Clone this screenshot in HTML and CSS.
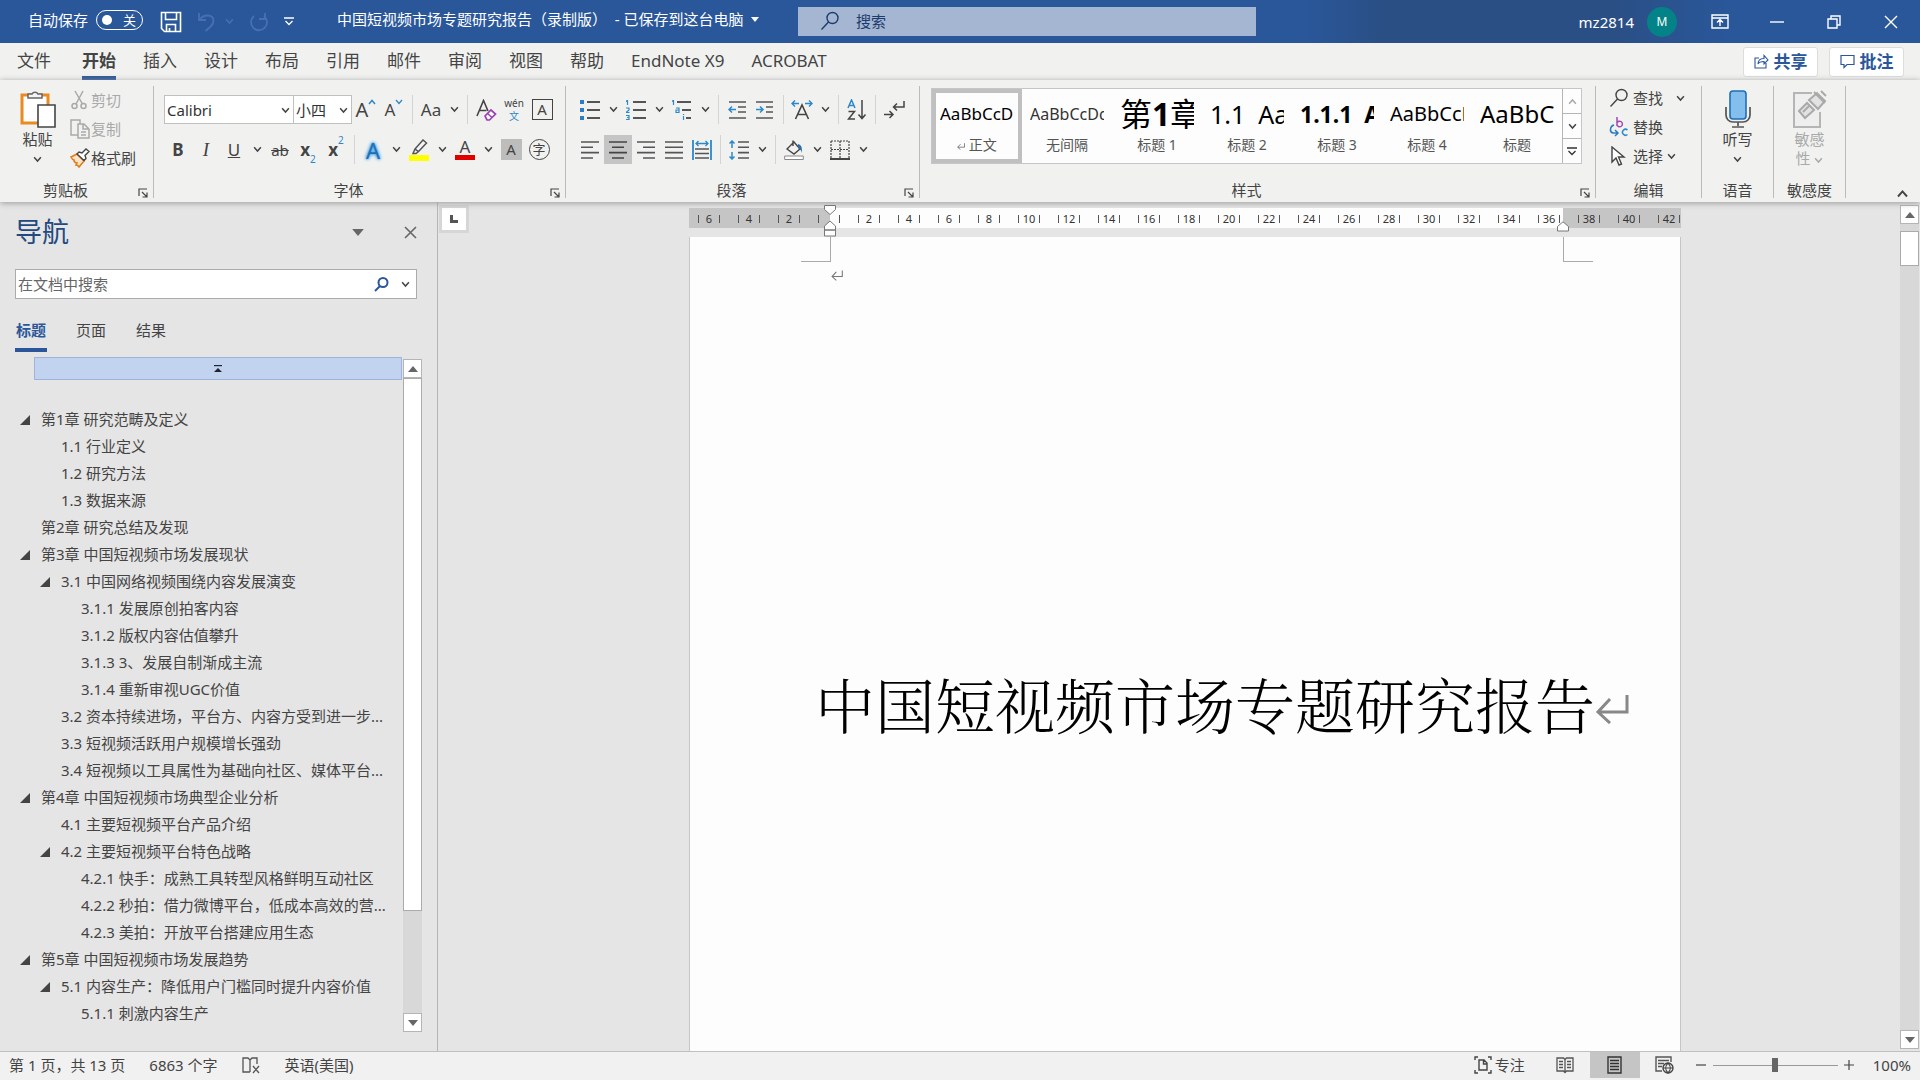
FILE: index.html
```html
<!DOCTYPE html>
<html lang="zh-CN">
<head>
    <meta charset="UTF-8">
    <meta name="viewport" content="width=device-width, initial-scale=1.0">
    <title>中国短视频市场专题研究报告（录制版）</title>
    <link rel="stylesheet" href="styles.css">
</head>
<body>
<!-- shared icons -->
<svg class="defs" aria-hidden="true">
    <symbol id="chev" viewBox="0 0 8 6"><path d="M1 1l3 3.400L7 1" fill="none" stroke="currentColor" stroke-width="1.300"/></symbol>
    <symbol id="tri-down" viewBox="0 0 10 6"><path d="M0 0h10L5 6z" fill="currentColor"/></symbol>
    <symbol id="tri-up" viewBox="0 0 10 6"><path d="M0 6h10L5 0z" fill="currentColor"/></symbol>
    <symbol id="fold" viewBox="0 0 10 10"><path d="M0 10h10V0z" fill="currentColor"/></symbol>
    <symbol id="launch" viewBox="0 0 10 10"><path d="M1 8V1h8M4 4l5 5M9 4.500V9H4.500" fill="none" stroke="currentColor" stroke-width="1.200"/></symbol>
    <symbol id="lens" viewBox="0 0 20 20"><g fill="none" stroke="currentColor" stroke-width="1.400"><circle cx="12.500" cy="7" r="5.500"/><path d="M8.500 11L1.500 18.500"/></g></symbol>
    <symbol id="enter" viewBox="0 0 34 30"><path d="M32 1v17H3M15 5L3 18l12 11" fill="none" stroke="currentColor" stroke-width="3"/></symbol>
</svg>

<header class="titlebar">
    <div class="autosave">
        <span>自动保存</span>
        <button class="toggle" aria-label="自动保存">关</button>
    </div>
    <div class="quick">
        <button aria-label="保存"><svg width="22" height="22" viewBox="0 0 22 22"><path d="M1.500 1.500h19v19h-16l-3-3zM5.500 1.500v7h11v-7M6.500 20v-6.500h9V20M9.500 20v-3" fill="none" stroke="#fff" stroke-width="1.600"/></svg></button>
        <button class="off" aria-label="撤消"><svg width="20" height="20" viewBox="0 0 20 20"><path d="M2 1v7h7M2.500 7.500C7 2 16 2 16.500 8.500c.2 4-3.500 7-8 10.500" fill="none" stroke="currentColor" stroke-width="1.800"/></svg><svg class="chev"><use href="#chev"/></svg></button>
        <button class="off" aria-label="重复"><svg width="20" height="20" viewBox="0 0 20 20"><path d="M16 1v6h-6M5 4a8 8 0 1 0 10 0" fill="none" stroke="currentColor" stroke-width="1.800"/></svg></button>
        <button aria-label="自定义"><svg width="10" height="9" viewBox="0 0 10 9"><path d="M0 1h10M1.500 4L5 7.500 8.500 4" fill="none" stroke="#fff" stroke-width="1.300"/></svg></button>
    </div>
    <div class="doc-name">中国短视频市场专题研究报告（录制版）&nbsp; <span>- 已保存到这台电脑</span> <svg width="8" height="5"><use href="#tri-down"/></svg></div>
    <label class="search">
        <svg width="20" height="20"><use href="#lens"/></svg>
        <input type="text" placeholder="搜索" aria-label="搜索">
    </label>
    <div class="account">
        <span>mz2814</span>
        <span class="avatar">M</span>
    </div>
    <div class="win">
        <button aria-label="功能区显示选项"><svg width="18" height="15" viewBox="0 0 18 15"><path d="M1 1h16v13H1zM1 4h16M9 12V6M6 8.500l3-3 3 3" fill="none" stroke="#fff" stroke-width="1.400"/></svg></button>
        <button aria-label="最小化"><svg width="14" height="14" viewBox="0 0 14 14"><path d="M0 7h14" stroke="#fff" stroke-width="1.400"/></svg></button>
        <button aria-label="还原"><svg width="14" height="14" viewBox="0 0 14 14"><path d="M1 4h9v9H1zM4 4V1h9v9h-3" fill="none" stroke="#fff" stroke-width="1.400"/></svg></button>
        <button aria-label="关闭"><svg width="14" height="14" viewBox="0 0 14 14"><path d="M1 1l12 12M13 1L1 13" stroke="#fff" stroke-width="1.400"/></svg></button>
    </div>
</header>

<nav class="tabs">
    <a href="#" class="file">文件</a>
    <a href="#" class="on">开始</a>
    <a href="#">插入</a>
    <a href="#">设计</a>
    <a href="#">布局</a>
    <a href="#">引用</a>
    <a href="#">邮件</a>
    <a href="#">审阅</a>
    <a href="#">视图</a>
    <a href="#">帮助</a>
    <a href="#">EndNote X9</a>
    <a href="#">ACROBAT</a>
    <div class="tab-actions">
        <button><svg width="15" height="15" viewBox="0 0 15 15"><path d="M5 4H1v10h11V9M4 10c0-4 3-5.500 6-5.500V1.500L14 6l-4 4V7.500C7 7.500 5 8 4 10z" fill="none" stroke="currentColor" stroke-width="1.100"/></svg>共享</button>
        <button><svg width="15" height="15" viewBox="0 0 15 15"><path d="M1 1.500h13v9H7L4 13.500v-3H1z" fill="none" stroke="currentColor" stroke-width="1.200"/></svg>批注</button>
    </div>
</nav>

<section class="ribbon">
    <div class="group clipboard">
        <div class="body">
            <button class="big">
                <svg width="36" height="38" viewBox="0 0 36 38"><path d="M2 5h26v28H2z" fill="#fff" stroke="#eb8a1e" stroke-width="3"/><path d="M8 8V4h4a3.500 3.500 0 0 1 6 0h4v4z" fill="#f4f4f4" stroke="#666" stroke-width="1.500"/><path d="M18 15h17v22H18z" fill="#fff" stroke="#444" stroke-width="1.600"/></svg>
                <span>粘贴</span>
                <svg class="chev"><use href="#chev"/></svg>
            </button>
            <div class="stack">
                <button class="off"><svg width="20" height="20" viewBox="0 0 20 20"><g fill="none" stroke="currentColor" stroke-width="1.500"><path d="M5 1l7.500 13M13 1L6 14"/><circle cx="4.500" cy="16" r="2.500"/><circle cx="13.500" cy="16" r="2.500"/></g></svg>剪切</button>
                <button class="off"><svg width="20" height="20" viewBox="0 0 20 20"><path d="M8 16H1V1h9v4M8 5h6l5 5v9H8zM13 5v5h6M11 13h5M11 16h5" fill="none" stroke="currentColor" stroke-width="1.500"/></svg>复制</button>
                <button><svg width="20" height="20" viewBox="0 0 20 20"><path d="M1 9l6-3 7 7-5 6c-1-2-2-2-3-2l1-2c-2 0-3-1-3-3-1 0-2-1-3-3z" fill="#fbe3c5" stroke="#e07c1c" stroke-width="1.600"/><path d="M7 6l2-2 3 1 4-4 3 2.500-4 4 1 3-2 2z" fill="#fff" stroke="#444" stroke-width="1.400"/></svg>格式刷</button>
            </div>
        </div>
        <div class="caption">剪贴板<button class="launch" aria-label="剪贴板选项"><svg width="10" height="10"><use href="#launch"/></svg></button></div>
    </div>

    <div class="group font">
        <div class="body rows">
            <div class="row">
                <span class="combo face"><select aria-label="字体"><option>Calibri</option></select><svg class="chev"><use href="#chev"/></svg></span>
                <span class="combo size"><select aria-label="字号"><option>小四</option></select><svg class="chev"><use href="#chev"/></svg></span>
                <button class="ib grow" aria-label="增大字号">A<svg width="8" height="6" viewBox="0 0 8 6"><path d="M1 5l3-3.500L7 5" fill="none" stroke="#2b88c9" stroke-width="1.500"/></svg></button>
                <button class="ib shrink" aria-label="减小字号">A<svg width="8" height="6"><use href="#chev"/></svg></button>
                <i class="sep"></i>
                <button class="ib aa">Aa</button><button class="dd" aria-label="更多"><svg class="chev"><use href="#chev"/></svg></button>
                <i class="sep"></i>
                <button class="ib" aria-label="清除格式"><svg width="22" height="22" viewBox="0 0 22 22"><path d="M2 17L8.500 1.500 13 12M4.500 11.500h7" fill="none" stroke="#444" stroke-width="1.600"/><path d="M10 17l6-6 4.500 4-6 6H12z" fill="#fff" stroke="#9b3fb5" stroke-width="1.700"/><path d="M12.500 14.500l4.500 4" stroke="#9b3fb5" stroke-width="1.500"/></svg></button>
                <button class="ib pinyin"><span>wén</span><b>文</b></button>
                <button class="ib"><span class="boxed">A</span></button>
            </div>
            <div class="row">
                <button class="ib"><b>B</b></button>
                <button class="ib it">I</button>
                <button class="ib"><u>U</u></button><button class="dd" aria-label="下划线"><svg class="chev"><use href="#chev"/></svg></button>
                <button class="ib"><s>ab</s></button>
                <button class="ib script"><b>x</b><sub>2</sub></button>
                <button class="ib script"><b>x</b><sup>2</sup></button>
                <i class="sep"></i>
                <button class="ib glow">A</button><button class="dd" aria-label="文本效果"><svg class="chev"><use href="#chev"/></svg></button>
                <button class="ib" aria-label="突出显示"><svg width="22" height="22" viewBox="0 0 22 22"><path d="M1 16h20v6H1z" fill="#ff0"/><path d="M7 10l8-9 3.500 3-8 8.500zM7 10l-2 4.500h3l2.500-2" fill="#f4f4f4" stroke="#555" stroke-width="1.500"/></svg></button><button class="dd" aria-label="颜色"><svg class="chev"><use href="#chev"/></svg></button>
                <button class="ib"><span class="red">A</span></button><button class="dd" aria-label="字体颜色"><svg class="chev"><use href="#chev"/></svg></button>
                <button class="ib"><span class="shade">A</span></button>
                <button class="ib"><span class="circled">字</span></button>
            </div>
        </div>
        <div class="caption">字体<button class="launch" aria-label="字体选项"><svg width="10" height="10"><use href="#launch"/></svg></button></div>
    </div>

    <div class="group para">
        <div class="body rows">
            <div class="row">
                <button class="ib" aria-label="项目符号"><svg width="20" height="20" viewBox="0 0 20 20"><path d="M0 0h4v4H0zM0 8h4v4H0zM0 16h4v4H0z" fill="#2b7cc4"/><path d="M7 2h13M7 10h13M7 18h13" stroke="#555" stroke-width="1.800"/></svg></button><button class="dd" aria-label="更多"><svg class="chev"><use href="#chev"/></svg></button>
                <button class="ib" aria-label="编号"><svg width="20" height="20" viewBox="0 0 20 20"><path d="M0 1.500L1.500 0v5M0 8h3v2L0 12.500h3.500M0 15.500h3v4H0M1 17.500h2" fill="none" stroke="#2b88c9" stroke-width="1.200"/><path d="M7 2h13M7 10h13M7 18h13" stroke="#555" stroke-width="1.800"/></svg></button><button class="dd" aria-label="更多"><svg class="chev"><use href="#chev"/></svg></button>
                <button class="ib" aria-label="多级列表"><svg width="20" height="20" viewBox="0 0 20 20"><path d="M0 1.500L1.500 0v5M4 8h3v4.500H4V10h3M11.500 14v1M11.500 16v4" fill="none" stroke="#2b88c9" stroke-width="1.200"/><path d="M5 2h14M10 10h9M14 18h5" stroke="#555" stroke-width="1.800"/></svg></button><button class="dd" aria-label="更多"><svg class="chev"><use href="#chev"/></svg></button>
                <i class="sep"></i>
                <button class="ib" aria-label="减少缩进"><svg width="18" height="18" viewBox="0 0 18 18"><path d="M1 1h17M10 6h8M10 11h8M1 17h17" stroke="#555" stroke-width="1.600"/><path d="M8 8.500H1M4 5.500l-3 3 3 3" fill="none" stroke="#2b88c9" stroke-width="1.500"/></svg></button>
                <button class="ib" aria-label="增加缩进"><svg width="18" height="18" viewBox="0 0 18 18"><path d="M0 1h17M10 6h7M10 11h7M0 17h17" stroke="#555" stroke-width="1.600"/><path d="M0 8.500h7M4 5.500l3 3-3 3" fill="none" stroke="#2b88c9" stroke-width="1.500"/></svg></button>
                <i class="sep"></i>
                <button class="ib" aria-label="中文版式"><svg width="22" height="20" viewBox="0 0 22 20"><path d="M4.500 19L11 5l6.500 14M7 14.500h8" fill="none" stroke="#444" stroke-width="1.600"/><path d="M8 3.500H1M4 .5l-3 3 3 3M14 3.500h7M18 .5l3 3-3 3" fill="none" stroke="#2b88c9" stroke-width="1.400"/></svg></button><button class="dd" aria-label="更多"><svg class="chev"><use href="#chev"/></svg></button>
                <i class="sep"></i>
                <button class="ib" aria-label="排序"><svg width="20" height="21" viewBox="0 0 20 21"><path d="M1 9l3.500-8L8 9M2.500 6.500h4" fill="none" stroke="#2b88c9" stroke-width="1.500"/><path d="M1.500 12.500h6L1.500 20H8M15 1v18M11.500 15.500L15 19.500l3.500-4" fill="none" stroke="#444" stroke-width="1.500"/></svg></button>
                <i class="sep"></i>
                <button class="ib" aria-label="显示编辑标记"><svg width="22" height="20" viewBox="0 0 22 20"><path d="M21 1v6H11M14 3.500L10.500 7l3.500 3.500M1 14.500h9M6.500 11l3.500 3.500L6.500 18" fill="none" stroke="#444" stroke-width="1.500"/></svg></button>
            </div>
            <div class="row">
                <button class="ib" aria-label="左对齐"><svg width="18" height="18" viewBox="0 0 18 18"><path d="M0 1h18M0 6.300h12M0 11.600h18M0 17h12" stroke="#555" stroke-width="1.600"/></svg></button>
                <button class="ib on" aria-label="居中"><svg width="18" height="18" viewBox="0 0 18 18"><path d="M0 1h18M3 6.300h12M0 11.600h18M3 17h12" stroke="#444" stroke-width="1.600"/></svg></button>
                <button class="ib" aria-label="右对齐"><svg width="18" height="18" viewBox="0 0 18 18"><path d="M0 1h18M6 6.300h12M0 11.600h18M6 17h12" stroke="#555" stroke-width="1.600"/></svg></button>
                <button class="ib" aria-label="两端对齐"><svg width="18" height="18" viewBox="0 0 18 18"><path d="M0 1h18M0 6.300h18M0 11.600h18M0 17h18" stroke="#555" stroke-width="1.600"/></svg></button>
                <button class="ib" aria-label="分散对齐"><svg width="20" height="20" viewBox="0 0 20 20"><path d="M1 0v20M19 0v20" stroke="#2b88c9" stroke-width="1.800"/><path d="M4 3.500h12M6.500 1L4 3.500 6.500 6M13.500 1L16 3.500 13.500 6" fill="none" stroke="#2b88c9" stroke-width="1.300"/><path d="M3 9h14M3 13.500h14M3 18h14" stroke="#555" stroke-width="1.600"/></svg></button>
                <i class="sep"></i>
                <button class="ib" aria-label="行距"><svg width="20" height="20" viewBox="0 0 20 20"><path d="M3 1v7M3 12v7M.5 3.500L3 1l2.500 2.500M.5 16.500L3 19l2.500-2.500" fill="none" stroke="#2b88c9" stroke-width="1.500"/><path d="M9 2h11M9 7.300h11M9 12.600h11M9 18h11" stroke="#555" stroke-width="1.600"/></svg></button><button class="dd" aria-label="更多"><svg class="chev"><use href="#chev"/></svg></button>
                <i class="sep"></i>
                <button class="ib" aria-label="底纹"><svg width="20" height="20" viewBox="0 0 20 20"><path d="M3 9l7-7 6 7-6 5zM9 6V.5" fill="none" stroke="#444" stroke-width="1.400"/><path d="M14 4c4 1 4 4 4 9-1-3-2-4-4-5z" fill="#2b6ca8"/><path d="M.7 16h18.600v3.500H.7z" fill="#fff" stroke="#888"/></svg></button><button class="dd" aria-label="更多"><svg class="chev"><use href="#chev"/></svg></button>
                <button class="ib" aria-label="边框"><svg width="20" height="20" viewBox="0 0 20 20"><path d="M1 1h18M1 1v17M19 1v17M10 1v17M1 9.500h18" stroke="#444" stroke-width="1.200" stroke-dasharray="2 1"/><path d="M0 19h20" stroke="#444" stroke-width="2"/></svg></button><button class="dd" aria-label="更多"><svg class="chev"><use href="#chev"/></svg></button>
            </div>
        </div>
        <div class="caption">段落<button class="launch" aria-label="段落选项"><svg width="10" height="10"><use href="#launch"/></svg></button></div>
    </div>

    <div class="group styles">
        <div class="gallery">
            <button class="style on"><span class="pv">AaBbCcD</span><span class="nm"><svg width="8" height="7"><use href="#enter"/></svg> 正文</span></button>
            <button class="style"><span class="pv light">AaBbCcDd</span><span class="nm">无间隔</span></button>
            <button class="style"><span class="pv h1">第<b>1</b>章</span><span class="nm">标题 1</span></button>
            <button class="style"><span class="pv h2">1.1&nbsp; AaB</span><span class="nm">标题 2</span></button>
            <button class="style"><span class="pv h3">1.1.1&nbsp; Aa</span><span class="nm">标题 3</span></button>
            <button class="style"><span class="pv h4">AaBbCcD</span><span class="nm">标题 4</span></button>
            <button class="style"><span class="pv ht">AaBbCc</span><span class="nm">标题</span></button>
            <div class="more">
                <button class="off" aria-label="上一行"><svg class="chev flip"><use href="#chev"/></svg></button>
                <button aria-label="下一行"><svg class="chev"><use href="#chev"/></svg></button>
                <button aria-label="其他"><svg width="10" height="9" viewBox="0 0 10 9"><path d="M0 1h10M1.500 4L5 7.500 8.500 4" fill="none" stroke="#333" stroke-width="1.300"/></svg></button>
            </div>
        </div>
        <div class="caption">样式<button class="launch" aria-label="样式选项"><svg width="10" height="10"><use href="#launch"/></svg></button></div>
    </div>

    <div class="group edit">
        <div class="body">
            <div class="stack">
                <button><svg width="20" height="20"><use href="#lens"/></svg>查找<svg class="chev wide"><use href="#chev"/></svg></button>
                <button><svg width="20" height="20" viewBox="0 0 20 20"><g fill="none" stroke-width="1.500"><path d="M8 0v9M8 6a2.800 2.800 0 1 1 0 2" stroke="#a349b5"/><path d="M18.500 13a3 3 0 1 0 0 4.500" stroke="#2b88c9"/><path d="M5 8C1 9 0 15 4 16h5M6 13l3 3-3 3" stroke="#2b7cc4"/></g></svg>替换</button>
                <button><svg width="20" height="20" viewBox="0 0 20 20"><path d="M3 1v15l4-4 3 7 2.500-1-3-7h5.500z" fill="#fff" stroke="#444" stroke-width="1.400"/></svg>选择<svg class="chev"><use href="#chev"/></svg></button>
            </div>
        </div>
        <div class="caption">编辑</div>
    </div>

    <div class="group voice">
        <div class="body">
            <button class="big">
                <svg width="26" height="38" viewBox="0 0 26 38"><rect x="5" y="1" width="16" height="28" rx="3" fill="#83beec" stroke="#1f6fb5" stroke-width="1.600"/><path d="M1 17v8c0 4 3 7 7 7h10c4 0 7-3 7-7v-8M13 32v4M7 37h12" fill="none" stroke="#555" stroke-width="1.700"/></svg>
                <span>听写</span>
                <svg class="chev"><use href="#chev"/></svg>
            </button>
        </div>
        <div class="caption">语音</div>
    </div>

    <div class="group sens">
        <div class="body">
            <button class="big off">
                <svg width="36" height="38" viewBox="0 0 36 38"><path d="M20 3H2v34h26V22" fill="#eee" stroke="#b5b5b5" stroke-width="2"/><path d="M7 21l8-8 7 7-9 8zM17 10l8-7 8 8-7 8zM22 2l11 11M29 1l5 5M11 22l6-6" fill="#e2e2e2" stroke="#a9a9a9" stroke-width="2"/></svg>
                <span>敏感</span>
                <span class="tight">性 <svg class="chev"><use href="#chev"/></svg></span>
            </button>
        </div>
        <div class="caption">敏感度</div>
    </div>

    <button class="collapse" aria-label="折叠功能区"><svg class="flip" width="13" height="9"><use href="#chev"/></svg></button>
</section>

<main>
    <aside class="nav">
        <div class="nav-head">
            <h2>导航</h2>
            <button aria-label="任务窗格选项"><svg width="12" height="7"><use href="#tri-down"/></svg></button>
            <button aria-label="关闭"><svg width="13" height="13" viewBox="0 0 13 13"><path d="M1 1l11 11M12 1L1 12" stroke="currentColor" stroke-width="1.600"/></svg></button>
        </div>
        <label class="nav-search">
            <input type="text" placeholder="在文档中搜索" aria-label="在文档中搜索">
            <svg width="15" height="15" viewBox="0 0 15 15"><g fill="none" stroke="#2b579a" stroke-width="2"><circle cx="9" cy="5.500" r="4.500"/><path d="M6 9l-5 5"/></g></svg>
            <svg class="chev"><use href="#chev"/></svg>
        </label>
        <div class="nav-tabs">
            <a href="#" class="on">标题</a>
            <a href="#">页面</a>
            <a href="#">结果</a>
        </div>
        <div class="nav-body">
            <div class="tree">
                <button class="top" aria-label="跳转到文档开头"><svg width="8" height="8" viewBox="0 0 8 8"><path d="M0 .6h8" stroke="#223" stroke-width="1.200"/><path d="M0 7l4-4 4 4z" fill="#223"/></svg></button>
                <ul>
                    <li class="l1"><svg class="fold"><use href="#fold"/></svg><a href="#">第1章 研究范畴及定义</a></li>
                    <li class="l2"><a href="#">1.1 行业定义</a></li>
                    <li class="l2"><a href="#">1.2 研究方法</a></li>
                    <li class="l2"><a href="#">1.3 数据来源</a></li>
                    <li class="l1"><a href="#">第2章 研究总结及发现</a></li>
                    <li class="l1"><svg class="fold"><use href="#fold"/></svg><a href="#">第3章 中国短视频市场发展现状</a></li>
                    <li class="l2"><svg class="fold"><use href="#fold"/></svg><a href="#">3.1 中国网络视频围绕内容发展演变</a></li>
                    <li class="l3"><a href="#">3.1.1 发展原创拍客内容</a></li>
                    <li class="l3"><a href="#">3.1.2 版权内容估值攀升</a></li>
                    <li class="l3"><a href="#">3.1.3 3、发展自制渐成主流</a></li>
                    <li class="l3"><a href="#">3.1.4 重新审视UGC价值</a></li>
                    <li class="l2"><a href="#">3.2 资本持续进场，平台方、内容方受到进一步...</a></li>
                    <li class="l2"><a href="#">3.3 短视频活跃用户规模增长强劲</a></li>
                    <li class="l2"><a href="#">3.4 短视频以工具属性为基础向社区、媒体平台...</a></li>
                    <li class="l1"><svg class="fold"><use href="#fold"/></svg><a href="#">第4章 中国短视频市场典型企业分析</a></li>
                    <li class="l2"><a href="#">4.1 主要短视频平台产品介绍</a></li>
                    <li class="l2"><svg class="fold"><use href="#fold"/></svg><a href="#">4.2 主要短视频平台特色战略</a></li>
                    <li class="l3"><a href="#">4.2.1 快手：成熟工具转型风格鲜明互动社区</a></li>
                    <li class="l3"><a href="#">4.2.2 秒拍：借力微博平台，低成本高效的营...</a></li>
                    <li class="l3"><a href="#">4.2.3 美拍：开放平台搭建应用生态</a></li>
                    <li class="l1"><svg class="fold"><use href="#fold"/></svg><a href="#">第5章 中国短视频市场发展趋势</a></li>
                    <li class="l2"><svg class="fold"><use href="#fold"/></svg><a href="#">5.1 内容生产：降低用户门槛同时提升内容价值</a></li>
                    <li class="l3"><a href="#">5.1.1 刺激内容生产</a></li>
                </ul>
            </div>
            <div class="scroll">
                <button aria-label="向上"><svg width="10" height="6"><use href="#tri-up"/></svg></button>
                <div class="thumb"></div>
                <div class="space"></div>
                <button aria-label="向下"><svg width="10" height="6"><use href="#tri-down"/></svg></button>
            </div>
        </div>
    </aside>

    <button class="tabstop" aria-label="制表符"><svg width="8" height="8" viewBox="0 0 8 8"><path d="M1.500 0v6.500H8" fill="none" stroke="#555" stroke-width="3"/></svg></button>

    <div class="canvas">
        <div class="ruler">
            <div class="ticks">
                <span>6</span><span>4</span><span>2</span><span></span><span>2</span><span>4</span><span>6</span><span>8</span><span>10</span><span>12</span><span>14</span><span>16</span><span>18</span><span>20</span><span>22</span><span>24</span><span>26</span><span>28</span><span>30</span><span>32</span><span>34</span><span>36</span><span>38</span><span>40</span><span>42</span>
            </div>
            <svg class="indent left" width="12" height="34" viewBox="0 0 12 34"><path d="M.5 1.500h11v4L6 10.500.5 5.500zM.5 26v-4L6 17l5.500 5v4zM.5 26h11v6H.5z" fill="#fff" stroke="#777"/></svg>
            <svg class="indent right" width="12" height="11" viewBox="0 0 12 11"><path d="M.5 10V5.500L6 .8l5.500 4.700V10z" fill="#fff" stroke="#777"/></svg>
        </div>
        <article class="page">
            <div class="corners"><i class="cl"></i><i class="cr"></i></div>
            <p class="blank"><svg width="12" height="11"><use href="#enter"/></svg></p>
            <h1>中国短视频市场专题研究报告<svg width="34" height="30"><use href="#enter"/></svg></h1>
        </article>
    </div>

    <div class="scroll doc-scroll">
        <button aria-label="向上"><svg width="10" height="6"><use href="#tri-up"/></svg></button>
        <div class="thumb"></div>
        <div class="space"></div>
        <button aria-label="向下"><svg width="10" height="6"><use href="#tri-down"/></svg></button>
    </div>
</main>

<footer class="status">
    <span>第 1 页，共 13 页</span>
    <span>6863 个字</span>
    <button aria-label="校对"><svg width="19" height="17" viewBox="0 0 19 17"><path d="M8 15H1V1h5l2 2 2-2h5v6M8 3v12M11 9l6 7M17 9l-6 7" fill="none" stroke="#555" stroke-width="1.300"/></svg></button>
    <span>英语(美国)</span>
    <div class="views">
        <button class="focus"><svg width="18" height="18" viewBox="0 0 18 18"><path d="M4 1H1v3M14 1h3v3M4 17H1v-3M14 17h3v-3M5 4h5l3 3v7H5zM9.500 4v4H13" fill="none" stroke="#444" stroke-width="1.400"/></svg>专注</button>
        <button class="view" aria-label="阅读视图"><svg width="18" height="17" viewBox="0 0 18 17"><path d="M1 1h6.500L9 2.500 10.500 1H17v13h-6.500L9 15.500 7.500 14H1zM9 2.500v13M3 4.500h4M3 7.500h4M3 10.500h4M11 4.500h4M11 7.500h4M11 10.500h4" fill="none" stroke="#555" stroke-width="1.300"/></svg></button>
        <button class="view on" aria-label="页面视图"><svg width="15" height="18" viewBox="0 0 15 18"><path d="M1 1h13v16H1zM3 4.500h9M3 7.500h9M3 10.500h9M3 13.500h9" fill="none" stroke="#333" stroke-width="1.400"/></svg></button>
        <button class="view" aria-label="Web 版式视图"><svg width="19" height="18" viewBox="0 0 19 18"><path d="M7 15H1V1h15v5M3 4.500h11M3 7.500h6M3 10.500h4" fill="none" stroke="#555" stroke-width="1.400"/><circle cx="13" cy="12" r="5" fill="#f1f1f1" stroke="#444" stroke-width="1.400"/><path d="M8 12h10M13 7c-3 3-3 7 0 10c3-3 3-7 0-10" fill="none" stroke="#444" stroke-width="1.200"/></svg></button>
    </div>
    <button class="zoom-btn" aria-label="缩小"><svg width="10" height="10" viewBox="0 0 10 10"><path d="M0 5h10" stroke="#444" stroke-width="1.200"/></svg></button>
    <input type="range" min="0" max="100" value="50" aria-label="缩放">
    <button class="zoom-btn" aria-label="放大"><svg width="10" height="10" viewBox="0 0 10 10"><path d="M0 5h10M5 0v10" stroke="#444" stroke-width="1.200"/></svg></button>
    <span class="pct">100%</span>
</footer>
</body>
</html>
```
FILE: styles.css
```css
* {
    box-sizing: border-box;
}
body {
    margin: 0;
    height: 100vh;
    display: flex;
    flex-direction: column;
    overflow: hidden;
    font-family: "Noto Sans", "Noto Sans CJK SC", sans-serif;
    font-size: 15px;
    line-height: 20px;
    color: #444;
    background-color: #e5e5e5;
}
button {
    display: flex;
    align-items: center;
    justify-content: center;
    padding: 0;
    border: 0;
    background: none;
    font: inherit;
    color: inherit;
}
a {
    color: inherit;
    text-decoration: none;
}
input, select {
    font: inherit;
    color: inherit;
    border: 0;
    outline: 0;
    background: none;
}
svg {
    flex: none;
}
.defs {
    position: absolute;
    width: 0;
    height: 0;
}
.chev {
    width: 9px;
    height: 7px;
}
.flip {
    transform: rotate(180deg);
}

/* title bar */
.titlebar {
    display: flex;
    align-items: center;
    flex: none;
    height: 43px;
    padding-left: 28px;
    color: #fff;
    background: linear-gradient(90deg, transparent 68%, #2a4f85 72%, #2a4f85 84%, transparent 90%) #2a579a;
}
.autosave {
    display: flex;
    align-items: center;
    gap: 8px;
    padding-bottom: 3px;
}
.toggle {
    position: relative;
    width: 47px;
    height: 20px;
    padding-left: 20px;
    border: 1px solid #fff;
    border-radius: 10px;
    font-size: 13px;
}
.toggle::before {
    content: "";
    position: absolute;
    left: 5px;
    top: 4px;
    width: 10px;
    height: 10px;
    border-radius: 5px;
    background-color: #fff;
}
.quick {
    display: flex;
    align-items: center;
    gap: 15px;
    width: 177px;
    padding-left: 17px;
}
.quick .off {
    color: #4770b0;
    gap: 8px;
}
.doc-name {
    width: 478px;
    padding: 0 0 5px 17px;
    white-space: nowrap;
}
.doc-name svg {
    margin: 0 0 3px 4px;
}
.search {
    display: flex;
    align-items: center;
    gap: 16px;
    width: 458px;
    height: 29px;
    padding-left: 22px;
    margin-bottom: 1px;
    background-color: #a4b6d2;
    color: #1d3c6e;
}
.search input {
    flex: 1;
    padding: 0;
}
.search input::placeholder {
    color: #1d3c6e;
}
.account {
    display: flex;
    align-items: center;
    gap: 13px;
    margin-left: auto;
}
.avatar {
    width: 30px;
    height: 30px;
    border-radius: 15px;
    line-height: 30px;
    text-align: center;
    font-size: 12px;
    background-color: #038387;
}
.win {
    display: flex;
    padding: 0 1px 0 14px;
}
.win button {
    width: 57px;
    height: 43px;
}

/* tabs */
.tabs {
    display: flex;
    align-items: center;
    flex: none;
    gap: 27px;
    height: 37px;
    padding: 0 16px 0 17px;
    font-size: 17px;
    background-color: #f1f2f0;
}
.tabs a {
    padding: 6px 0 3px;
    border-bottom: 4px solid transparent;
    line-height: 24px;
}
.tabs .file {
    margin-right: 4px;
}
.tabs .on {
    font-weight: bold;
    border-color: #2b579a;
}
.tab-actions {
    display: flex;
    gap: 11px;
    margin-left: auto;
}
.tab-actions button {
    gap: 5px;
    width: 75px;
    height: 30px;
    border: 1px solid #ddd;
    border-radius: 3px;
    background-color: #fff;
    color: #2b579a;
    font-weight: bold;
}

/* ribbon */
.ribbon {
    display: flex;
    flex: none;
    height: 122px;
    padding: 6px 0 4px;
    background-color: #f1f2f0;
    box-shadow: 0 1px 6px #999;
    position: relative;
}
.group {
    display: flex;
    flex-direction: column;
    flex: none;
    justify-content: space-between;
    border-right: 1px solid #bbb;
}
.clipboard {
    width: 154px;
}
.font {
    width: 412px;
}
.para {
    width: 354px;
}
.styles {
    flex: 1;
    min-width: 0;
}
.edit {
    width: 106px;
}
.voice, .sens {
    width: 72px;
}
.body {
    display: flex;
    height: 92px;
}
.caption {
    display: flex;
    justify-content: center;
    position: relative;
    line-height: 16px;
}
.clipboard .caption, .font .caption, .para .caption, .styles .caption {
    padding-right: 22px;
}
.launch {
    position: absolute;
    right: 5px;
    bottom: 0;
}
.big {
    flex-direction: column;
    justify-content: flex-start;
    width: 72px;
    padding-top: 4px;
}
.clipboard .big {
    width: 70px;
    padding-left: 5px;
}
.big > .chev {
    margin-top: 7px;
}
.big span {
    margin-top: 1px;
}
.big .tight {
    margin-top: -1px;
}
.stack {
    display: flex;
    flex-direction: column;
    align-items: flex-start;
    gap: 9px;
    padding-top: 4px;
}
.stack button {
    gap: 1px;
}
.edit .stack {
    padding: 2px 0 0 13px;
}
.edit .stack button {
    gap: 4px;
}
.stack .wide {
    margin-left: 9px;
}
.off {
    color: #a9a9a9;
}
.rows {
    flex-direction: column;
    gap: 11px;
    padding: 9px 0 0 10px;
}
.row {
    display: flex;
    height: 29px;
}
.ib {
    width: 28px;
    font-size: 17px;
}
.ib.on {
    background-color: #c5c5c5;
}
.dd {
    width: 18px;
}
.sep {
    width: 1px;
    margin: 0 4px;
    background-color: #d4d4d4;
}
.combo {
    position: relative;
    border: 1px solid #c0c0c0;
    background-color: #fff;
}
.combo select {
    width: 100%;
    height: 27px;
    padding: 0 2px;
    appearance: none;
    color: #333;
}
.combo .chev {
    position: absolute;
    right: 3px;
    top: 11px;
}
.face {
    width: 130px;
}
.size {
    width: 58px;
    border-left: 0;
}
.grow {
    font-size: 20px;
}
.grow svg, .shrink svg {
    align-self: flex-start;
    margin-top: 4px;
    color: #2b88c9;
}
.pinyin {
    flex-direction: column;
    font-size: 10px;
    line-height: 13px;
}
.pinyin b {
    color: #2b88c9;
    font-weight: normal;
}
.boxed, .circled, .shade {
    width: 21px;
    height: 21px;
    line-height: 18px;
    border: 1px solid #444;
    font-size: 15px;
}
.circled {
    border-radius: 11px;
    font-size: 13px;
}
.shade {
    border-color: #bdbdbd;
    background-color: #bdbdbd;
}
.it {
    font-family: "Liberation Serif", serif;
    font-style: italic;
    font-size: 19px;
}
.ib s {
    font-size: 15px;
}
.script sub, .script sup {
    font-size: 10px;
    line-height: 10px;
    color: #2b88c9;
}
.script sub {
    align-self: flex-end;
}
.script sup {
    align-self: flex-start;
}
.glow {
    font-size: 22px;
    color: #1f6fb5;
    text-shadow: 0 0 2px #4aa3e8, 0 0 3px #4aa3e8, 0 0 4px #4aa3e8;
}
.red {
    width: 20px;
    height: 21px;
    line-height: 15px;
    border-bottom: 5px solid #e00000;
}

/* style gallery */
.gallery {
    display: flex;
    height: 76px;
    margin: 2px 13px 0 11px;
    border: 1px solid #c6c6c6;
    background-color: #fdfdfd;
}
.style {
    flex: 1;
    min-width: 0;
    flex-direction: column;
    justify-content: flex-end;
    padding: 0 5px 3px;
    border: 3px solid transparent;
}
.style.on {
    border: 4px solid #c0c0c0;
    padding: 0 4px 2px;
}
.pv {
    width: 100%;
    height: 38px;
    overflow: hidden;
    white-space: nowrap;
    text-align: left;
    line-height: 38px;
    font-size: 17px;
    color: #000;
}
.light {
    font-size: 16px;
    color: #333;
}
.h1 {
    font-size: 32px;
}
.h2 {
    font-size: 25px;
}
.h3 {
    font-size: 23px;
    font-weight: bold;
}
.h4 {
    font-size: 20px;
}
.ht {
    font-size: 24px;
}
.nm {
    font-size: 14px;
    line-height: 24px;
    color: #555;
}
.more {
    width: 19px;
    display: flex;
    flex-direction: column;
}
.more button {
    flex: 1;
    border-left: 1px solid #b5b5b5;
    border-bottom: 1px solid #b5b5b5;
}
.more button:last-child {
    border-bottom: 0;
}
.collapse {
    flex: none;
    width: 74px;
    align-items: flex-end;
    padding-left: 38px;
}

/* workspace */
main {
    flex: 1;
    min-height: 0;
    display: flex;
}
.nav {
    display: flex;
    flex-direction: column;
    flex: none;
    width: 438px;
    padding: 15px 15px 19px;
    border-right: 1px solid #b5b5b5;
}
.nav-head {
    display: flex;
    align-items: center;
    gap: 40px;
    padding-right: 5px;
    color: #666;
}
.nav-head h2 {
    margin: 0 auto 0 0;
    font-size: 27px;
    font-weight: normal;
    line-height: 30px;
    color: #234a80;
}
.nav-search {
    display: flex;
    align-items: center;
    gap: 12px;
    height: 30px;
    margin: 22px 5px 0 0;
    padding: 0 6px 0 2px;
    border: 1px solid #ababab;
    background-color: #fff;
}
.nav-search input {
    flex: 1;
    padding: 0;
}
.nav-search input::placeholder {
    color: #666;
}
.nav-tabs {
    display: flex;
    gap: 28px;
    margin-top: 20px;
}
.nav-tabs a {
    padding: 1px 1px 8px;
    border-bottom: 4px solid transparent;
}
.nav-tabs .on {
    font-weight: bold;
    color: #2b579a;
    border-color: #2b579a;
}
.nav-body {
    flex: 1;
    min-height: 0;
    display: flex;
    gap: 1px;
    padding-top: 5px;
}
.tree {
    flex: 1;
    overflow: hidden;
}
.top {
    width: calc(100% - 19px);
    height: 23px;
    margin-left: 19px;
    border: 1px solid #9db5de;
    background-color: #c2d3f0;
}
.tree ul {
    margin: 26px 0 0;
    padding: 0;
    list-style: none;
}
.tree li {
    position: relative;
    height: 27px;
    line-height: 27px;
    white-space: nowrap;
}
.l1 {
    padding-left: 26px;
}
.l2 {
    padding-left: 46px;
}
.l3 {
    padding-left: 66px;
}
.fold {
    position: absolute;
    top: 9px;
    width: 10px;
    height: 10px;
    margin-left: -21px;
}
.scroll {
    display: flex;
    flex-direction: column;
    width: 19px;
    margin-top: 2px;
    background-color: #d8d8d8;
    color: #666;
}
.scroll button {
    height: 19px;
    border: 1px solid #b5b5b5;
    background-color: #fff;
}
.thumb {
    flex: 533;
    border: 1px solid #ababab;
    background-color: #fff;
}
.space {
    flex: 102;
}
.tabstop {
    width: 30px;
    height: 28px;
    margin: 3px 0 0 1px;
    border: 3px solid #d6d6d6;
    background-color: #fff;
}
.canvas {
    flex: 1;
    display: flex;
    flex-direction: column;
    align-items: center;
    padding: 6px 0 0 1px;
}
.ruler {
    position: relative;
    width: 992px;
    height: 20px;
    background: linear-gradient(90deg, #c5c5c5 141px, #fdfdfd 141px, #fdfdfd 874px, #c5c5c5 874px);
}
.ticks {
    display: flex;
    height: 20px;
    overflow: hidden;
    font-size: 11px;
    color: #333;
}
.ticks span {
    flex: none;
    width: 22px;
    height: 8px;
    margin: 7px 9px;
    border: solid #555;
    border-width: 0 1px;
    line-height: 8px;
    text-align: center;
}
.indent {
    position: absolute;
}
.left {
    left: 135px;
    top: -4px;
}
.right {
    left: 868px;
    top: 13px;
}
.page {
    flex: 1;
    width: 992px;
    margin-top: 9px;
    border: 1px solid #c6c6c6;
    border-width: 0 1px;
    background-color: #fdfdfd;
    color: #000;
}
.corners {
    display: flex;
    justify-content: space-between;
    padding: 0 87px 0 111px;
}
.corners i {
    width: 30px;
    height: 25px;
    border: solid #aaa;
    border-width: 0 0 1px;
}
.corners .cl {
    border-right-width: 1px;
}
.corners .cr {
    border-left-width: 1px;
}
.blank {
    margin: 3px 0 0 141px;
    color: #777;
}
.page h1 {
    display: flex;
    align-items: center;
    justify-content: center;
    margin: 384px 0 0 74px;
    font-family: "Liberation Serif", "Noto Serif CJK SC", "Noto Sans CJK SC", serif;
    font-size: 60px;
    font-weight: 300;
    line-height: 80px;
    white-space: nowrap;
}
.page h1 svg {
    color: #888;
}
.doc-scroll {
    margin: 3px 1px 2px 0;
}
.doc-scroll .thumb {
    flex: none;
    height: 35px;
    margin-top: 7px;
}

/* status bar */
.status {
    display: flex;
    align-items: center;
    flex: none;
    height: 29px;
    padding: 0 9px 2px;
    border-top: 1px solid #c0c0c0;
    gap: 24px;
    background-color: #f1f1f1;
}
.views {
    display: flex;
    align-items: center;
    margin-left: auto;
}
.focus {
    gap: 3px;
    margin-right: 15px;
}
.view {
    width: 50px;
    height: 26px;
}
.view.on {
    background-color: #c5c5c5;
}
.zoom-btn {
    margin: 0 -17px 0 -18px;
}
.status input {
    width: 125px;
    height: 16px;
    margin: 0;
    appearance: none;
    background: linear-gradient(#999, #999) center / 100% 1px no-repeat;
}
.status input::-webkit-slider-thumb {
    appearance: none;
    width: 6px;
    height: 14px;
    background-color: #666;
}
.pct {
    margin-left: 12px;
}
```
